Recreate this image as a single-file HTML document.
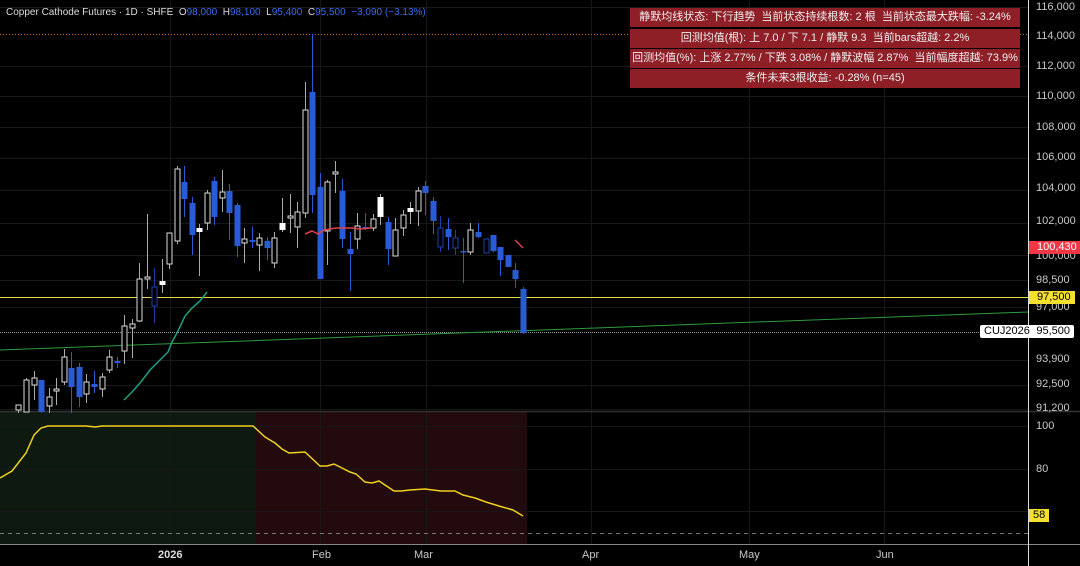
<!DOCTYPE html>
<html><head><meta charset="utf-8"><style>
html,body{margin:0;padding:0;background:#000;}
body{width:1080px;height:566px;overflow:hidden;position:relative;font-family:"Liberation Sans","Noto Sans CJK SC",sans-serif;}
.ax{position:absolute;left:1036px;color:#c8c8c8;font-size:11px;line-height:13px;}
.tag{position:absolute;font-size:11px;line-height:13px;padding:0 3px;}
.info{position:absolute;left:630px;width:390px;background:#8e1f27;color:#eee;font-size:11px;text-align:center;height:19px;line-height:19px;}
.mon{position:absolute;top:549px;color:#c8c8c8;font-size:11px;}
</style></head><body>
<svg id="s" width="1080" height="566" style="position:absolute;left:0;top:0">
<rect x="0" y="412" width="256" height="132" fill="#0e1a10"/>
<rect x="256" y="412" width="271" height="132" fill="#220a0d"/>
<g stroke="#171717" stroke-width="1">
<line x1="0" y1="7.5" x2="1028" y2="7.5"/><line x1="0" y1="66.5" x2="1028" y2="66.5"/><line x1="0" y1="96.5" x2="1028" y2="96.5"/>
<line x1="0" y1="127.5" x2="1028" y2="127.5"/><line x1="0" y1="158.5" x2="1028" y2="158.5"/><line x1="0" y1="190.5" x2="1028" y2="190.5"/>
<line x1="0" y1="223.5" x2="1028" y2="223.5"/><line x1="0" y1="255.5" x2="1028" y2="255.5"/><line x1="0" y1="280.5" x2="1028" y2="280.5"/>
<line x1="0" y1="307.5" x2="1028" y2="307.5"/><line x1="0" y1="360.5" x2="1028" y2="360.5"/><line x1="0" y1="385.5" x2="1028" y2="385.5"/>
<line x1="0" y1="409.5" x2="1028" y2="409.5"/>
<line x1="0" y1="426.5" x2="1028" y2="426.5"/><line x1="0" y1="469.5" x2="1028" y2="469.5"/><line x1="0" y1="511.5" x2="1028" y2="511.5"/>
<line x1="170.5" y1="0" x2="170.5" y2="544"/><line x1="320.5" y1="0" x2="320.5" y2="544"/><line x1="426.5" y1="0" x2="426.5" y2="544"/>
<line x1="591.5" y1="0" x2="591.5" y2="544"/><line x1="749.5" y1="0" x2="749.5" y2="544"/><line x1="884.5" y1="0" x2="884.5" y2="544"/>
</g>
<line x1="0" y1="411.5" x2="1080" y2="411.5" stroke="#333" stroke-width="1.5"/>
<line x1="0" y1="544.5" x2="1080" y2="544.5" stroke="#888" stroke-width="1"/>
<line x1="1028.5" y1="0" x2="1028.5" y2="566" stroke="#ddd" stroke-width="1"/>
<line x1="0" y1="34.5" x2="1028" y2="34.5" stroke="#c86a10" stroke-width="1" stroke-dasharray="1 2"/>
<line x1="0" y1="533.5" x2="1028" y2="533.5" stroke="#777" stroke-width="1" stroke-dasharray="4 4"/>
<line x1="0" y1="332.5" x2="980" y2="332.5" stroke="#999" stroke-width="1" stroke-dasharray="1 1"/>
<line x1="0" y1="350" x2="1028" y2="312" stroke="#2e9a3c" stroke-width="1"/>
<line x1="0" y1="297.5" x2="1028" y2="297.5" stroke="#e6d84a" stroke-width="1"/>
<g id="c"></g>
<polyline fill="none" stroke="#1aa184" stroke-width="1.5" points="124,400 132,392 140,383 150,370 160,360 168,352 172,342 178,331 185,316 192,308 200,301 207,292"/>
<polyline fill="none" stroke="#e0404a" stroke-width="1.5" points="305,234 312,231 318,234 324,230 330,229 336,228 344,228 352,228 360,229 372,228"/>
<line x1="515" y1="240" x2="523" y2="248" stroke="#e0404a" stroke-width="1.5"/>
<polyline fill="none" stroke="#f0d020" stroke-width="1.5" points="0,478 12,471 26,453 34,435 41,428 48,426 86,426 95,427 102,426 253,426 265,437 275,443 282,449 289,453 305,452 320,466 327,466 334,464 350,472 356,474 365,482 372,483 379,481 394,491 401,491 410,490 425,489 441,491 455,491 463,495 475,498 486,502 499,506 513,510 523,516"/>
</svg>
<div style="position:absolute;left:6px;top:7px;font-size:10px;color:#ddd;white-space:nowrap">Copper Cathode Futures · 1D · SHFE&nbsp; O<span style="color:#3a6cf0">98,000</span>&nbsp; H<span style="color:#3a6cf0">98,100</span>&nbsp; L<span style="color:#3a6cf0">95,400</span>&nbsp; C<span style="color:#3a6cf0">95,500</span>&nbsp; <span style="color:#3a6cf0">−3,090 (−3.13%)</span></div>
<div class="info" style="top:8px">静默均线状态: 下行趋势&nbsp; 当前状态持续根数: 2 根&nbsp; 当前状态最大跌幅: -3.24%</div>
<div class="info" style="top:29px">回测均值(根): 上 7.0 / 下 7.1 / 静默 9.3&nbsp; 当前bars超越: 2.2%</div>
<div class="info" style="top:49px">回测均值(%): 上涨 2.77% / 下跌 3.08% / 静默波幅 2.87%&nbsp; 当前幅度超越: 73.9%</div>
<div class="info" style="top:69px">条件未来3根收益: -0.28% (n=45)</div>
<div class="ax" style="top:1px">116,000</div><div class="ax" style="top:30px">114,000</div>
<div class="ax" style="top:60px">112,000</div><div class="ax" style="top:90px">110,000</div>
<div class="ax" style="top:121px">108,000</div><div class="ax" style="top:151px">106,000</div>
<div class="ax" style="top:182px">104,000</div><div class="ax" style="top:215px">102,000</div>
<div class="ax" style="top:250px">100,000</div><div class="ax" style="top:274px">98,500</div>
<div class="ax" style="top:301px">97,000</div><div class="ax" style="top:353px">93,900</div>
<div class="ax" style="top:378px">92,500</div><div class="ax" style="top:402px">91,200</div>
<div class="ax" style="top:420px">100</div><div class="ax" style="top:463px">80</div>
<div class="tag" style="left:1029px;top:241px;background:#f23645;color:#fff;padding:0 4px 0 8px">100,430</div>
<div class="tag" style="left:1029px;top:291px;background:#f5e030;color:#000;padding:0 4px 0 8px">97,500</div>
<div class="tag" style="left:980px;top:325px;background:#fff;color:#000;border-radius:2px;padding:0 4px;width:86px">CUJ2026<span style="float:right">95,500</span></div>
<div class="tag" style="left:1029px;top:509px;background:#f5e030;color:#000;padding:0 4px 0 4px">58</div>
<div class="mon" style="left:158px;font-weight:bold;color:#ddd">2026</div>
<div class="mon" style="left:312px">Feb</div><div class="mon" style="left:414px">Mar</div>
<div class="mon" style="left:582px">Apr</div><div class="mon" style="left:739px">May</div><div class="mon" style="left:876px">Jun</div>
<script>
var d=[[53,405,410,405,413,'w'],[75,380,412,378,412,'w'],[98,378,385,371,400,'w'],[120,380,412,380,413,'b'],[142,397,406,388,413,'w'],[163,389,391,378,405,'w'],
[185,357,382,349,385,'w'],[207,368,387,352,413,'b'],[230,367,397,363,407,'b'],[251,382,394,374,403,'w'],[273,384,387,371,393,'b'],[295,377,389,373,397,'w'],
[317,357,370,350,373,'w'],[339,361,363,357,368,'b'],[360,326,351,315,364,'w'],[382,324,328,319,358,'w'],[404,279,321,263,322,'w'],[426,277,279,214,289,'w'],
[448,287,306,268,323,'h'],[470,281,285,259,293,'W'],[492,233,264,233,269,'w'],[513,169,241,166,244,'w'],[535,182,199,166,217,'b'],[557,203,235,197,255,'b'],
[579,228,232,224,276,'W'],[601,193,223,190,230,'w'],[622,181,217,177,225,'b'],[644,192,198,170,212,'w'],[666,191,213,184,240,'b'],[688,205,246,203,257,'b'],
[710,239,243,228,263,'w'],[731,240,242,227,248,'b'],[753,238,245,233,271,'w'],[775,241,248,237,260,'b'],[797,238,263,232,268,'w'],[819,223,230,198,232,'W'],
[841,216,218,194,233,'w'],[863,212,227,202,248,'w'],[885,110,213,82,218,'w'],[907,92,195,34,213,'b'],[929,187,279,173,279,'b'],[951,182,231,180,265,'w'],
[972,172,174,161,193,'w'],[994,191,239,179,248,'b'],[1016,249,254,232,291,'b'],[1038,226,239,213,249,'w'],[1060,227,229,213,230,'b'],[1082,219,228,214,231,'w'],
[1104,197,217,194,225,'W'],[1126,222,249,217,265,'b'],[1148,230,256,218,256,'w'],[1169,215,228,210,236,'w'],[1191,208,212,202,224,'W'],[1213,191,211,187,226,'w'],
[1235,186,193,181,215,'b'],[1257,201,221,197,234,'b'],[1278,228,247,216,252,'h'],[1300,229,237,218,250,'b'],[1322,238,248,230,255,'h'],[1344,251,252,238,283,'b'],
[1366,230,252,223,255,'w'],[1388,232,237,223,238,'b'],[1410,239,253,238,253,'h'],[1432,235,251,235,252,'b'],[1453,247,260,247,276,'b'],[1475,255,267,255,267,'b'],
[1497,270,279,263,288,'b'],[1518,289,333,287,334,'b']];
var s='';
d.forEach(function(c){var x=Math.round(c[0]/2.904)+0.5,t=c[5];
var wc=(t=='w'||t=='W')?'#aaa':(t=='h'?'#1f3fa8':'#2a5bd7');
s+='<line x1="'+x+'" y1="'+c[3]+'" x2="'+x+'" y2="'+c[4]+'" stroke="'+wc+'" stroke-width="1"/>';
var h=Math.max(c[2]-c[1],1.5),y=c[1];
if(t=='w')s+='<rect x="'+(x-2.5)+'" y="'+y+'" width="5" height="'+h+'" fill="#000" stroke="#ddd" stroke-width="1"/>';
else if(t=='W')s+='<rect x="'+(x-3)+'" y="'+y+'" width="6" height="'+h+'" fill="#fff"/>';
else if(t=='h')s+='<rect x="'+(x-2.5)+'" y="'+y+'" width="5" height="'+h+'" fill="#000" stroke="#1f3fa8" stroke-width="1"/>';
else s+='<rect x="'+(x-3)+'" y="'+y+'" width="6" height="'+h+'" fill="#2a5bd7"/>';});
document.getElementById('c').innerHTML=s;
var sv=document.getElementById('s');sv.innerHTML=sv.innerHTML;
</script>
</body></html>
